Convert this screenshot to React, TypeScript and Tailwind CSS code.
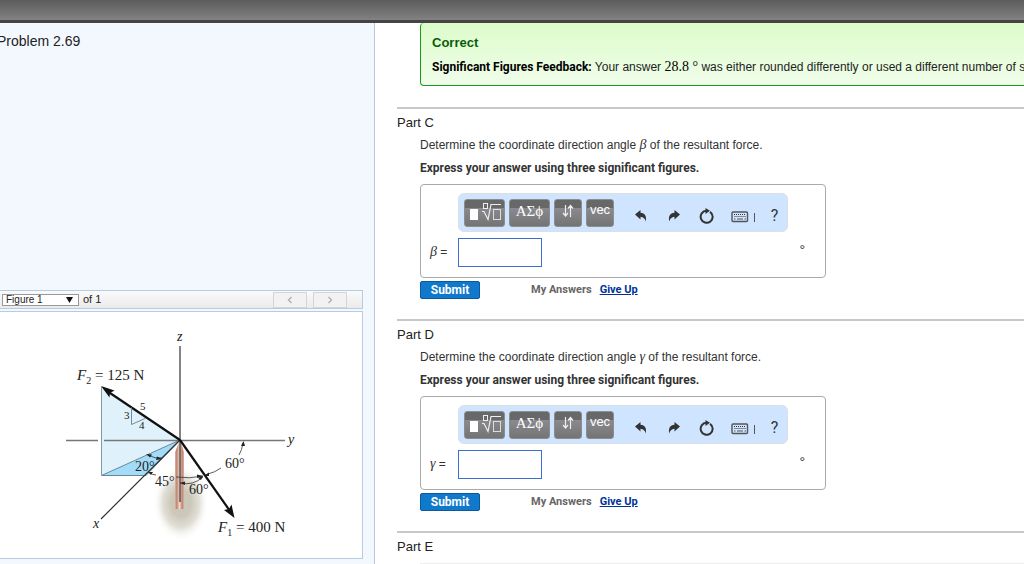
import type { ReactNode } from "react";

const parts = [
    { id: "c", title: "Part C", symbol: "β" },
    { id: "d", title: "Part D", symbol: "γ" },
];

const figures = ["Figure 1"];

function ToolKey({ label, className, children }: { label: string; className: string; children: ReactNode }) {
    return (
        <button
            type="button"
            aria-label={label}
            className={`flex h-7 justify-center rounded-[3px] border border-[#8d8d8d] bg-linear-to-b from-[#686868] from-30% via-[#8b8a90] via-30% to-[#747474] text-white ${className}`}
        >
            {children}
        </button>
    );
}

function Toolbar() {
    return (
        <div className="ml-[37px] mt-2 flex h-[39px] w-[330px] items-center rounded-md border border-[#dcdfe4] bg-[#cfe5ff] px-[5px]">
            <div className="flex gap-1">
                <ToolKey label="Templates" className="w-[41px]">
                    <svg width="39" height="26" viewBox="0 0 39 26" fill="none">
                        <rect x="5" y="9" width="8" height="11" fill="#fff" />
                        <rect x="18.5" y="3.500" width="4" height="5" stroke="#eee" />
                        <path d="M17 11.500h2l4 8 3-15h10" stroke="#eee" strokeWidth="1.200" />
                        <rect x="28.500" y="9.500" width="7" height="10" stroke="#ddd" />
                    </svg>
                </ToolKey>
                <ToolKey label="Symbols" className="w-[41px] font-['Liberation_Serif',serif] text-[15px] leading-[22px]">
                    ΑΣϕ
                </ToolKey>
                <ToolKey label="Arrows" className="w-7">
                    <svg width="14" height="24" viewBox="0 0 14 24" fill="none" stroke="#eee" strokeWidth="1.200">
                        <path d="M4.500 5v11M2 13l2.500 3L7 13M9.500 17V5.500M7 8.500l2.500-3 2.500 3" />
                    </svg>
                </ToolKey>
                <ToolKey label="Vector" className="w-7 text-[13px] leading-[19px]">
                    vec
                </ToolKey>
            </div>
            <div className="flex flex-1 items-center pl-2.5 pt-1.5 text-[#333]">
                <button type="button" aria-label="Undo" className="flex w-[33px] justify-center">
                    <svg width="14" height="14" viewBox="0 0 14 14" fill="currentColor">
                        <path d="M1 5.500 6.500 1v2.700C11 4 12.800 7 11.800 12.500 11 9.500 9.500 8 6.500 7.700V10.500Z" />
                    </svg>
                </button>
                <button type="button" aria-label="Redo" className="flex w-[33px] justify-center">
                    <svg width="14" height="14" viewBox="0 0 14 14" fill="currentColor">
                        <path d="M13 5.500 7.500 1v2.700C3 4 1.200 7 2.200 12.500 3 9.500 4.500 8 7.500 7.700V10.500Z" />
                    </svg>
                </button>
                <button type="button" aria-label="Reset" className="flex w-[33px] justify-center">
                    <svg width="16" height="16" viewBox="0 0 16 16" fill="none" stroke="currentColor">
                        <path d="M11 3.800A6 6 0 1 1 7.500 2.800" strokeWidth="2" />
                        <path d="M6.500 0 11 2.800 6.500 6Z" fill="currentColor" stroke="none" />
                    </svg>
                </button>
                <button type="button" aria-label="Keyboard shortcuts" className="flex w-10 justify-center pt-[3px]">
                    <svg width="25" height="12" viewBox="0 0 25 12" fill="none" stroke="#555">
                        <rect x="1" y="1" width="15.500" height="9.500" rx="1" strokeWidth="1.400" />
                        <path d="M3 3.500h12M3.500 5.500h12" strokeDasharray="1 1" stroke="#333" />
                        <path d="M3 8h1.500M6 8h6M13.500 8H15" strokeWidth="1.200" />
                        <path d="M23.500 2v9" />
                    </svg>
                </button>
                <button type="button" aria-label="Help" className="flex-1 pl-1 font-[Roboto,sans-serif] text-base leading-4">
                    ?
                </button>
            </div>
        </div>
    );
}

function Part({ id, title, symbol }: { id: string; title: string; symbol: string }) {
    return (
        <section className="h-[212px] border-t-2 border-[#c8c8c8]">
            <h2 className="pt-1.5 text-[13px] leading-4 text-[#222]">{title}</h2>
            <div className="pl-[23px] pt-1.5 text-[#333]">
                <p className="leading-4">
                    Determine the coordinate direction angle{" "}
                    <i className="font-['Liberation_Serif',serif] text-sm leading-4">{symbol}</i> of the resultant force.
                </p>
                <p className="pt-[7px] font-[Roboto,sans-serif] font-bold leading-4">
                    Express your answer using three significant figures.
                </p>
                <div className="mt-2 h-[94px] w-[406px] rounded-[4px] border border-[#aaa]">
                    <Toolbar />
                    <div className="flex items-start pl-[9px] pt-1.5">
                        <label htmlFor={`answer-${id}`} className="w-7 pt-1.5 leading-4">
                            <i className="font-['Liberation_Serif',serif] text-sm leading-4">{symbol}</i> =
                        </label>
                        <input
                            id={`answer-${id}`}
                            type="text"
                            className="h-[29px] w-21 border border-[#3b6fd4] bg-white px-1"
                        />
                        <span className="ml-auto pr-5 text-sm leading-6">°</span>
                    </div>
                </div>
                <div className="flex items-center pt-[3px] font-[Roboto,sans-serif] text-[11px] font-bold">
                    <button
                        type="button"
                        className="h-[18px] w-15 rounded-[2px] border border-[#0b5a9c] bg-[#1079cc] text-xs leading-4 text-white"
                    >
                        Submit
                    </button>
                    <span className="pl-[51px] text-[#666]">My Answers</span>
                    <a href="#" className="ml-2 text-[#003399] underline">
                        Give Up
                    </a>
                </div>
            </div>
        </section>
    );
}

function ForceDiagram() {
    return (
        <svg
            viewBox="0 312 362 246"
            className="block w-full font-['Liberation_Serif',serif] text-sm"
            fill="none"
            role="img"
            aria-label="Forces F1 and F2"
        >
            <defs>
                <radialGradient id="ground">
                    <stop offset="0.350" stopColor="#cbc8b9" />
                    <stop offset="0.650" stopColor="#d9d7cc" stopOpacity="0.800" />
                    <stop offset="1" stopColor="#fff" stopOpacity="0" />
                </radialGradient>
                <linearGradient id="post">
                    <stop offset="0" stopColor="#e0b3a2" />
                    <stop offset="0.200" stopColor="#bd8471" />
                    <stop offset="0.500" stopColor="#f3d9cf" />
                    <stop offset="0.800" stopColor="#bd8471" />
                    <stop offset="1" stopColor="#e0b3a2" />
                </linearGradient>
            </defs>
            <ellipse cx="181" cy="503" rx="28" ry="38" fill="url(#ground)" />
            <path d="M180 440 175 452V509h9V452Z" fill="url(#post)" />

            {/* plane of F2 and its shadow on the floor */}
            <path d="M101.500 387V475L180 440Z" fill="#dff2fc" />
            <path d="M101.500 475.500H146L180 440Z" fill="#a3dcf9" stroke="#688792" />
            <path d="M101.500 387v88" stroke="#819aa4" />

            {/* axes */}
            <g stroke="#777" strokeWidth="1.500">
                <path d="M66 440.500h32M104 440.500h181" />
                <path d="M180 346V502" stroke="#333" strokeWidth="1.200" />
                <path d="M180 440 101 519" stroke="#333" strokeWidth="1.200" />
            </g>

            {/* forces */}
            <path d="M180 440 107 391" stroke="#111" strokeWidth="2.200" />
            <path d="M101 386 114.500 390.500 110 393 109.500 397.500Z" fill="#111" />
            <path d="M180 440 230 511" stroke="#111" strokeWidth="2.200" />
            <path d="M234.500 518 224 510 229 509 231.500 504.500Z" fill="#111" />

            {/* slope triangle */}
            <path d="M131.500 407.500V424.500L145 418.500" stroke="#7a8a90" />

            {/* angle arcs */}
            <g stroke="#333" strokeWidth="0.800">
                <path d="M148 455Q155 459 162 458M149 472Q152 475 156 475" />
                <path d="M176 477Q190 479 203 476M180 483Q193 486 203 477" />
                <path d="M205 475Q216 472 221 468M239 455Q242 450 243 443" />
            </g>
            <g fill="#222">
                <path d="M146 454l6 .5-2 3ZM162 459l-6 1 1-3.500ZM148 472l5 0-2 3ZM203 476l-6-1.500v3.500ZM180 483l5-1.500v3.500ZM204 476l5-3.500 0 3.500ZM203 476l-5 2 3 2ZM243.500 441l-2.500 5h4Z" />
            </g>

            <g fill="#222">
                <text x="177" y="341" fontStyle="italic">z</text>
                <text x="288" y="444" fontStyle="italic">y</text>
                <text x="93" y="528" fontStyle="italic">x</text>
                <text x="77" y="380" fontSize="15">
                    <tspan fontStyle="italic">F</tspan>
                    <tspan fontSize="10" dy="4">2</tspan>
                    <tspan dy="-4"> = 125 N</tspan>
                </text>
                <text x="218" y="532" fontSize="15">
                    <tspan fontStyle="italic">F</tspan>
                    <tspan fontSize="10" dy="4">1</tspan>
                    <tspan dy="-4"> = 400 N</tspan>
                </text>
                <text x="135" y="471">20°</text>
                <text x="155" y="486">45°</text>
                <text x="189" y="494">60°</text>
                <text x="225" y="468">60°</text>
                <g fontSize="11">
                    <text x="140" y="410">5</text>
                    <text x="124" y="419">3</text>
                    <text x="139" y="429">4</text>
                </g>
            </g>
        </svg>
    );
}

function FigurePanel() {
    return (
        <aside className="flex w-[375px] shrink-0 flex-col justify-between overflow-hidden border-r border-[#b7c9e0] bg-[#f3f8ff]">
            <h1 className="-ml-[3px] pt-2.5 text-sm leading-4 text-[#222]">Problem 2.69</h1>
            <div className="mr-[11px] pb-[5px]">
                <div className="flex h-[19px] items-center border border-l-0 border-[#b7cbe2] bg-linear-to-b from-[#fafafa] to-[#ebebeb] text-[11px]">
                    <div className="relative ml-0.5">
                        <select
                            aria-label="Figure"
                            className="block h-3 w-[77px] appearance-none border border-[#999] bg-white pl-[3px] text-[10px] leading-none"
                        >
                            {figures.map((name) => (
                                <option key={name}>{name}</option>
                            ))}
                        </select>
                        <svg className="pointer-events-none absolute right-1.5 top-[3px]" width="7" height="6" viewBox="0 0 7 6">
                            <path d="M0 0h7L3.500 6Z" fill="#111" />
                        </svg>
                    </div>
                    <span className="pl-1 text-[#222]">of 1</span>
                    <div className="ml-auto flex gap-1.5 self-end pr-[15px]">
                        <button type="button" aria-label="Previous figure" disabled className="flex h-4 w-[34px] items-center justify-center border border-[#d5d5d5] bg-[#f2f2f2]">
                            <svg width="6" height="8" viewBox="0 0 6 8" fill="none" stroke="#b5b5b5" strokeWidth="1.500">
                                <path d="M4.500 1 1.500 4l3 3" />
                            </svg>
                        </button>
                        <button type="button" aria-label="Next figure" disabled className="flex h-4 w-[34px] items-center justify-center border border-[#d5d5d5] bg-[#f2f2f2]">
                            <svg width="6" height="8" viewBox="0 0 6 8" fill="none" stroke="#b5b5b5" strokeWidth="1.500">
                                <path d="M1.500 1l3 3-3 3" />
                            </svg>
                        </button>
                    </div>
                </div>
                <div className="mt-0.5 border border-l-0 border-[#b7cbe2] bg-white">
                    <ForceDiagram />
                </div>
            </div>
        </aside>
    );
}

export default function App() {
    return (
        <div className="flex h-screen flex-col overflow-hidden bg-white font-['Liberation_Sans',Arial,sans-serif] text-xs text-[#222]">
            <header className="h-[23px] shrink-0 border-b-3 border-[#444] bg-linear-to-b from-[#5c5c5c] to-[#828282]" />
            <div className="flex min-h-0 flex-1">
                <FigurePanel />
                <main className="min-w-0 flex-1 overflow-hidden pl-[22px]">
                    <div className="ml-[23px] h-[63px] rounded-l-[4px] border-b border-l border-[#1a9c1a] bg-linear-to-b from-[#dcfcc9] to-[#f0fdea] pl-[11px]">
                        <h2 className="pt-3 text-[13px] font-bold leading-4 text-[#0a5c0a]">Correct</h2>
                        <p className="whitespace-nowrap pt-2 leading-4">
                            <b className="font-[Roboto,sans-serif] text-black">Significant Figures Feedback:</b> Your answer{" "}
                            <span className="font-['Liberation_Serif',serif] text-sm leading-4 text-black">28.8 °</span> was either
                            rounded differently or used a different number of significant
                        </p>
                    </div>
                    <div className="pt-[21px]">
                        {parts.map((part) => (
                            <Part key={part.id} {...part} />
                        ))}
                        <section className="border-t-2 border-[#c8c8c8]">
                            <h2 className="pt-1.5 text-[13px] leading-4">Part E</h2>
                            <div className="ml-[23px] mt-2 border-t border-[#eee]" />
                        </section>
                    </div>
                </main>
            </div>
        </div>
    );
}
